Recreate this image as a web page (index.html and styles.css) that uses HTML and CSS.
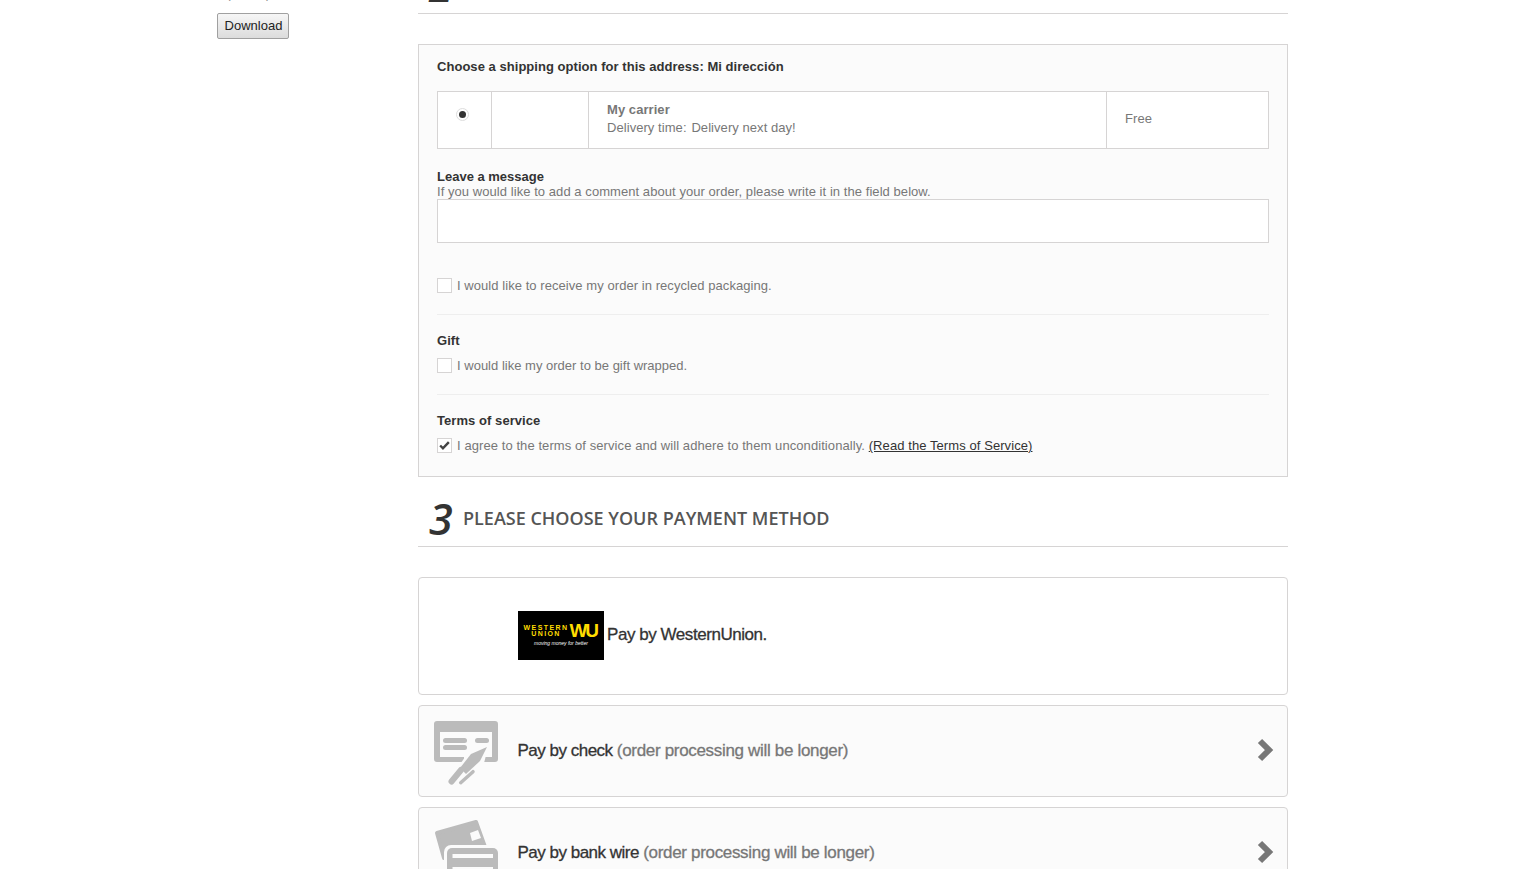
FILE: index.html
```html
<!DOCTYPE html>
<html lang="en">
<head>
<meta charset="utf-8">
<title>Order</title>
<link rel="stylesheet" href="styles.css">
</head>
<body>
<div class="page">
  <aside class="side">
    <p class="side-note">(1.2 MB)</p>
    <button class="download" type="button">Download</button>
  </aside>
  <main class="main">
    <h2 class="step"><span class="step-num">2</span><span class="step-title">Please choose your shipping option</span></h2>
    <section class="panel">
      <p class="strong choose">Choose a shipping option for this address: Mi dirección</p>
      <div class="carrier">
        <div class="cell c-radio"><span class="radio"></span></div>
        <div class="cell c-logo"></div>
        <div class="cell c-info"><b class="name">My carrier</b><span>Delivery time: &#8202;Delivery next day!</span></div>
        <div class="cell c-price">Free</div>
      </div>
      <p class="strong leave">Leave a message</p>
      <p class="hint">If you would like to add a comment about your order, please write it in the field below.</p>
      <div class="textarea"></div>
      <label class="check first"><span class="box"></span>I would like to receive my order in recycled packaging.</label>
      <hr class="sep">
      <p class="strong opt">Gift</p>
      <label class="check gift"><span class="box"></span>I would like my order to be gift wrapped.</label>
      <hr class="sep">
      <p class="strong opt">Terms of service</p>
      <label class="check terms"><span class="box"><svg viewBox="0 0 15 15" width="13" height="13"><path d="M2.5 7.5l3.2 3.2 6.8-7" fill="none" stroke="#444" stroke-width="2.8"/></svg></span>I agree to the terms of service and will adhere to them unconditionally.&nbsp;<a class="link" href="#">(Read the Terms of Service)</a></label>
    </section>
    <h2 class="step"><span class="step-num">3</span><span class="step-title">Please choose your payment method</span></h2>
    <a class="pay pay-wu" href="#">
      <span class="wu"><span class="wu-top"><span class="wu-name">WESTERN<br>UNION</span><span class="wu-mark">WU</span></span><span class="wu-tag">moving money for better</span></span>
      <span class="pay-text">Pay by WesternUnion.</span>
    </a>
    <a class="pay pay-row" href="#">
      <svg class="pay-icon" viewBox="0 0 64 64" width="64" height="64">
        <path fill="#bbb" d="M3 0H61a3 3 0 0 1 3 3V38a3 3 0 0 1-3 3H49V36H58V11H6V36H30V41H3a3 3 0 0 1-3-3V3a3 3 0 0 1 3-3Z"/>
        <rect fill="#bbb" x="9" y="17" width="24" height="5" rx="2.5"/>
        <rect fill="#bbb" x="9" y="24" width="24" height="5" rx="2.5"/>
        <rect fill="#bbb" x="41" y="17" width="14" height="5" rx="2.5"/>
        <path fill="#fbfbfb" d="M55 23L36 29L22 49L32 58L50 42Z"/>
        <path fill="#bbb" d="M53 26L37 33L26 47L32 53L46 40Z"/>
        <path d="M17.5 60.5L27 49" stroke="#bbb" stroke-width="6" stroke-linecap="round" fill="none"/>
        <path d="M26.7 61.7L39 50.7" stroke="#bbb" stroke-width="3.5" stroke-linecap="round" fill="none"/>
      </svg>
      <span class="pay-text">Pay by check <span class="muted">(order processing will be longer)</span></span>
      <svg class="chev" viewBox="0 0 18 24" width="18" height="24"><path d="M4 3L13 12L4 21" fill="none" stroke="#777" stroke-width="6"/></svg>
    </a>
    <a class="pay pay-row" href="#">
      <svg class="pay-icon" viewBox="0 0 64 64" width="64" height="64">
        <path fill="#bbb" stroke="#bbb" stroke-width="4" stroke-linejoin="round" d="M3 10L42 -1L51 24L10 35Z"/>
        <path fill="#fbfbfb" d="M36 10L44 7L47 15L38 18Z"/>
        <rect fill="#fbfbfb" x="10" y="22" width="57" height="46" rx="7"/>
        <rect fill="#bbb" x="13" y="25" width="51" height="40" rx="5"/>
        <rect fill="#fbfbfb" x="18.5" y="31" width="40.5" height="4"/>
        <rect fill="#fbfbfb" x="18.5" y="44" width="40.5" height="18"/>
      </svg>
      <span class="pay-text">Pay by bank wire <span class="muted">(order processing will be longer)</span></span>
      <svg class="chev" viewBox="0 0 18 24" width="18" height="24"><path d="M4 3L13 12L4 21" fill="none" stroke="#777" stroke-width="6"/></svg>
    </a>
  </main>
</div>
</body>
</html>
```
FILE: styles.css
```css
* { box-sizing: border-box; }
html, body { margin: 0; height: 869px; overflow: hidden; background: #fff; }
body { font: 13px/18px "Liberation Sans", Arial, sans-serif; color: #777; letter-spacing: .06px; }
p { margin: 0; }
a { color: inherit; text-decoration: none; }

.page { display: flex; margin: -56px 0 0 217px; width: 1071px; }
.side { width: 201px; flex: none; }
.side-note { height: 69px; padding-top: 44px; font-size: 11px; line-height: 14px; padding-left: 10px; }
.download { display: block; width: 72px; height: 26px; padding: 0 0 2px 1px; font: 13px "Liberation Sans", Arial, sans-serif; color: #222; border: 1px solid #a0a0a0; border-radius: 2px; background: linear-gradient(#f6f6f6, #dcdcdc); }

.main { width: 870px; flex: none; }
.step { display: flex; align-items: center; height: 70px; margin: 0 0 30px; padding: 0 0 0 11px; border-bottom: 1px solid #d6d4d4; font-weight: 400; }
.step-num { width: 34px; font: italic 600 43px/1 "Open Sans", sans-serif; color: #333; margin-top: 14px; letter-spacing: 0; }
.step-title { font: 600 18px/24px "Open Sans", sans-serif; text-transform: uppercase; color: #555; margin-top: 13px; letter-spacing: 0; }

.panel { height: 433px; border: 1px solid #d6d4d4; background: #fbfbfb; padding: 13px 18px 0; margin-bottom: 0; }
.strong { font-weight: 700; color: #333; }
.choose { margin-bottom: 15px; letter-spacing: .04px; }
.carrier { display: flex; height: 58px; border: 1px solid #d6d4d4; background: #fff; }
.cell { border-left: 1px solid #d6d4d4; padding: 0 18px; }
.c-radio { width: 53px; border-left: 0; padding: 16px 0 0 18px; }
.c-logo { width: 97px; }
.c-info { width: 518px; display: flex; flex-direction: column; justify-content: center; padding-bottom: 2px; }
.name { color: #777; }
.c-price { flex: 1; line-height: 54px; }
.radio { display: block; width: 13px; height: 13px; border-radius: 50%; border: 1px solid #ddd; background: #fff; position: relative; }
.radio::after { content: ""; position: absolute; left: 2px; top: 2px; width: 7px; height: 7px; border-radius: 50%; background: #333; }
.leave { margin-top: 19px; line-height: 17px; letter-spacing: 0; }
.hint { line-height: 14px; }
.textarea { height: 44px; border: 1px solid #d6d4d4; background: #fff; }
.check { display: flex; align-items: flex-start; height: 18px; }
.check.first { margin-top: 34px; }
.check.gift { letter-spacing: .01px; }
.check.terms { letter-spacing: .08px; }
.box { width: 15px; height: 15px; margin: 1px 5px 0 0; border: 1px solid #d6d4d4; background: #fff; display: flex; align-items: center; justify-content: center; flex: none; }
.link { color: #333; text-decoration: underline; }
.sep { height: 1px; margin: 19px 0 0; border: 0; background: #eee; }
.opt { margin-top: 17px; margin-bottom: 7px; }

.pay { display: flex; align-items: center; margin-bottom: 10px; border: 1px solid #d6d4d4; border-radius: 4px; color: #333; background: #fbfbfb; position: relative; }
.pay-wu { height: 118px; padding-left: 99px; background: #fff; }
.pay-row { height: 92px; padding: 15px 13px 11px 15px; }
.pay-icon { flex: none; margin-right: 19.5px; overflow: visible; }
.pay-text { font-size: 17px; line-height: 23px; letter-spacing: -0.5px; margin-bottom: 6px; -webkit-text-stroke: .3px currentColor; }
.pay-wu .pay-text { margin: 0 0 4px 3px; letter-spacing: -0.45px; }
.muted { color: #777; letter-spacing: -0.32px; }
.chev { margin-left: auto; margin-bottom: 6px; }

.wu { width: 86px; height: 49px; margin-bottom: 2px; background: #000; display: flex; flex-direction: column; align-items: center; justify-content: center; letter-spacing: 0; }
.wu-top { display: flex; align-items: center; gap: 1px; color: #fd0; margin-top: -1px; }
.wu-name { font: 700 7px/6px "Liberation Sans", sans-serif; letter-spacing: 1.4px; text-align: center; }
.wu-mark { font: 700 19px/15px "Liberation Sans", sans-serif; letter-spacing: -2px; width: 29px; }
.wu-tag { font: italic 5px/6px "Liberation Sans", sans-serif; color: #fff; margin-top: 2px; }
```
